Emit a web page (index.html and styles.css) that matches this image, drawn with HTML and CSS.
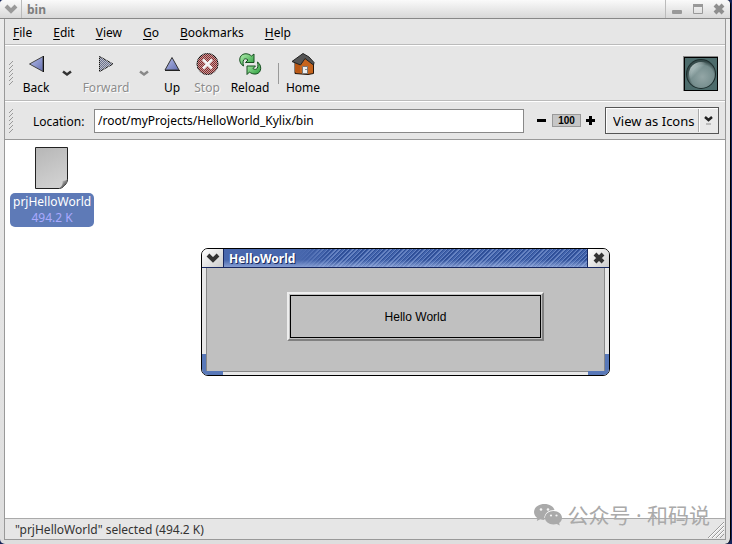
FILE: index.html
```html
<!DOCTYPE html>
<html lang="en">
<head>
<meta charset="utf-8">
<title>bin</title>
<link rel="stylesheet" href="styles.css">
</head>
<body>
<div class="window">
  <header class="titlebar">
    <button class="title-menu" aria-label="Window menu"><svg width="14" height="10" viewBox="0 0 14 10"><path class="chevron" d="M2 2 7 7 12 2"/></svg></button>
    <h1>bin</h1>
    <div class="title-controls">
      <button aria-label="Minimize"><svg width="12" height="12"><rect x="1" y="7" width="10" height="4" rx="1" fill="#999"/></svg></button>
      <button aria-label="Maximize"><svg width="12" height="12"><path d="M1.500 1.500h9v9h-9z" fill="none" stroke="#999"/><path d="M1 1h10v3H1z" fill="#999"/></svg></button>
      <button aria-label="Close"><svg width="12" height="12"><path d="M2 2 10 10M10 2 2 10" stroke="#8e8e8e" stroke-width="4"/></svg></button>
    </div>
  </header>
  <main class="content">
    <nav class="menubar">
      <button><u>F</u>ile</button><button><u>E</u>dit</button><button><u>V</u>iew</button><button><u>G</u>o</button><button><u>B</u>ookmarks</button><button><u>H</u>elp</button>
    </nav>
    <div class="toolbar">
      <svg class="grip" width="6" height="24" viewBox="0 0 6 24"><path d="M1 4 5 0M1 8 5 4M1 12 5 8M1 16 5 12M1 20 5 16M1 24 5 20" stroke="#999"/></svg>
      <button class="tool"><svg width="24" height="24"><defs><linearGradient id="blue" x1="0" y1="0" x2="1" y2="1"><stop offset="0" stop-color="#b9c1ec"/><stop offset="1" stop-color="#636eb0"/></linearGradient></defs><path d="M5.500 12 19 4.500v15z" fill="url(#blue)" stroke="#444"/><path d="M19.500 4v16" stroke="#111"/></svg><span>Back</span></button>
      <button class="drop" aria-label="Back history"><svg width="10" height="7"><path d="M1 1.500 5 4.500 9 1.500" fill="none" stroke="#333" stroke-width="2.500"/></svg></button>
      <button class="tool off" disabled><svg width="24" height="24"><defs><pattern id="checks" width="2" height="2" patternUnits="userSpaceOnUse"><path d="M0 0h1v1H0zM1 1h1v1H1z" fill="#e0e0e0"/></pattern></defs><path d="M5.500 4.500 19 12 5.500 19.500z" fill="#6b7290" stroke="#111"/><path d="M5 4 20 12 5 20z" fill="url(#checks)" opacity=".7"/></svg><span>Forward</span></button>
      <button class="drop" aria-label="Forward history" disabled><svg width="10" height="7"><path d="M1 1.500 5 4.500 9 1.500" fill="none" stroke="#888" stroke-width="2.500"/></svg></button>
      <button class="tool"><svg width="24" height="24"><path d="M12 5.500 19 18H5z" fill="url(#blue)" stroke="#333"/><path d="M5 18.500h15" stroke="#222"/></svg><span>Up</span></button>
      <button class="tool off" disabled><svg width="24" height="24"><circle cx="12.500" cy="12" r="10.500" fill="#8a2828" stroke="#000"/><circle cx="12.500" cy="12" r="11" fill="url(#checks)" opacity=".65"/><path d="M8 7.500 17 16.500M17 7.500 8 16.500" stroke="#f4f4f4" stroke-width="2.500"/></svg><span>Stop</span></button>
      <button class="tool"><svg width="24" height="24"><defs><linearGradient id="green" x1="0" y1="0" x2="1" y2="1"><stop offset="0" stop-color="#b8f1b4"/><stop offset="1" stop-color="#249b37"/></linearGradient></defs><g fill="url(#green)" stroke="#164f20"><path d="M5.500 14C0 11 .5 2.500 7 1.800c3-.3 5 1 6.500 2.200L16 2v8.500H7.500L10 8C6.500 5 4 8 5.500 14z"/><path d="M19.500 10C24 13 24 21 18 22c-3 .3-5-.7-6.500-2L9 22.500V14h8.500L15 16.500c3.500 2.500 6-.5 4.500-6.500z"/></g></svg><span>Reload</span></button>
      <i class="divider"></i>
      <button class="tool"><svg width="24" height="24"><path d="M4 10 14 5l8.500 7v9.500L17 22.500 4 21.500z" fill="#c6641c" stroke="#24150b"/><path d="M4 10 9 6v15L4 20z" fill="#b95714"/><path d="M1 9.500 12 1.500 18 5 23 10.500 22.500 13 14 6.500 9.500 13z" fill="#555" stroke="#222"/><path d="M11.500 14.500h5v7h-5z" fill="#eee" stroke="#777"/><path d="M15 17v1" stroke="#333"/></svg><span>Home</span></button>
      <span></span>
      <svg class="orb" width="35" height="35" viewBox="0 0 35 35"><defs><radialGradient id="glass" cx=".55" cy=".6" r=".55"><stop offset="0" stop-color="#93a6a6"/><stop offset=".75" stop-color="#768e8e"/><stop offset="1" stop-color="#354a4a"/></radialGradient><linearGradient id="shine" x1="0" y1="0" x2="1" y2="1"><stop offset=".12" stop-color="#dce9e9"/><stop offset=".4" stop-color="#dce9e9" stop-opacity="0"/></linearGradient></defs><path d="M0 0h35v35H0z" fill="#888"/><path d="M1 1h34v34H1z"/><path d="M2 2h32v32H2z" fill="#4c6b6b"/><circle cx="18" cy="18" r="15" fill="#1d2d2d"/><circle cx="18" cy="18" r="14" fill="url(#glass)"/><circle cx="18" cy="18" r="12" fill="url(#shine)" opacity=".8"/></svg>
    </div>
    <div class="locationbar">
      <svg class="grip" width="6" height="24" viewBox="0 0 6 24"><path d="M1 4 5 0M1 8 5 4M1 12 5 8M1 16 5 12M1 20 5 16M1 24 5 20" stroke="#999"/></svg>
      <label for="location">Location:</label>
      <input id="location" type="text" value="/root/myProjects/HelloWorld_Kylix/bin">
      <div class="zoom">
        <button aria-label="Zoom out"><svg width="10" height="10"><path d="M0 4.500h9" stroke="#000" stroke-width="3"/></svg></button>
        <button class="level">100</button>
        <button aria-label="Zoom in"><svg width="10" height="10"><path d="M0 4.500h9M4.500 0v9" stroke="#000" stroke-width="3"/></svg></button>
      </div>
      <div class="view">
        <select aria-label="View mode"><option>View as Icons</option></select>
        <svg class="view-arrow" width="21" height="23"><path d="M1.500 0v23" stroke="#aaa"/><path d="M2.500 0v23" stroke="#fff"/><path d="M8 8l3.500 3L15 8" fill="none" stroke="#222" stroke-width="2.500"/><path d="M9 15h5" stroke="#bbb" stroke-width="2"/></svg>
      </div>
    </div>
    <section class="files">
      <button class="file">
        <svg width="34" height="42" viewBox="0 0 34 42"><defs><linearGradient id="paper" x1="0" y1="0" x2=".4" y2="1"><stop offset="0" stop-color="#b6b6b6"/><stop offset="1" stop-color="#d0d0d0"/></linearGradient><linearGradient id="fold" x1="0" y1="0" x2="1" y2="1"><stop offset=".2" stop-color="#ddd"/><stop offset=".7" stop-color="#555"/></linearGradient></defs><path d="M.5.5h32v32.500c0 3-5 8.500-8 8.500H.5z" fill="url(#paper)" stroke="#222"/><path d="M32.500 32c-1 1-3 2-5 2 .5 3-.5 6-4 7.500 4 0 9-5 9-9.500z" fill="url(#fold)"/></svg>
        <span class="file-label">prjHelloWorld<small>494.2 K</small></span>
      </button>
    </section>
    <footer class="status"><span>"prjHelloWorld" selected (494.2 K)</span><svg class="resize" width="18" height="18"><path d="M1 18 17 2M5 18 17 6M9 18 17 10M13 18 17 14" stroke="#999"/><path d="M2 18 17 3M6 18 17 7M10 18 17 11" stroke="#fff"/></svg></footer>
  </main>
</div>

<section class="dialog" aria-labelledby="dialog-title">
  <header class="dialog-bar">
    <button aria-label="Dialog menu"><svg width="14" height="10" viewBox="0 0 14 10"><path class="chevron dark" d="M2 2 7 7 12 2"/></svg></button>
    <h2 id="dialog-title">HelloWorld</h2>
    <button aria-label="Close dialog"><svg width="12" height="12"><path d="M2 2 10 10M10 2 2 10" stroke="#333" stroke-width="4"/></svg></button>
  </header>
  <div class="dialog-body"><button class="hello"><span>Hello World</span></button></div>
  <i class="corner left"></i><i class="corner right"></i>
</section>

<div class="brand">
  <svg width="28" height="24" viewBox="0 0 28 24"><path d="M10.500 1C4.500 1 0 4.500 0 9c0 2.600 1.400 4.800 3.500 6.200L2.800 18l3.500-1.700c1.300.4 2.600.6 4.200.6C9.500 11 14 7 20.500 7 19.500 3.500 15.500 1 10.500 1z" fill="#aaa"/><path d="M19.500 8c-5 0-8.500 3-8.500 6.800s3.700 6.700 8.500 6.700c1.200 0 2.300-.2 3.300-.5l3 1.500-.7-2.500c1.800-1.200 2.900-3 2.900-5.200C28 11 24.500 8 19.500 8z" fill="#aaa"/><g fill="#f4f4f4"><circle cx="7" cy="6.500" r="1.300"/><circle cx="14" cy="6.500" r="1.300"/><circle cx="17" cy="12.500" r="1.100"/><circle cx="22.500" cy="12.500" r="1.100"/></g></svg>
  <span>公众号 · 和码说</span>
</div>
</body>
</html>
```
FILE: styles.css
```css
* { box-sizing: border-box; }
body {
  margin: 0;
  min-height: 100vh;
  background: #14235a;
  font: 12px/16px "Noto Sans", "Open Sans", sans-serif;
  color: #000;
}
button {
  margin: 0;
  padding: 0;
  border: 0;
  background: none;
  font: inherit;
  color: inherit;
}
svg { display: block; flex: none; }
h1, h2 { margin: 0; font-size: 12px; line-height: 16px; }

.window {
  display: flex;
  flex-direction: column;
  min-height: 100vh;
  margin-right: 1px;
  padding-bottom: 4px;
  border-right: 1px solid #000;
  border-radius: 4px 5px 6px 5px;
  background: linear-gradient(#ececec, #dedede);
}
.titlebar {
  display: flex;
  align-items: stretch;
  height: 19px;
  border-bottom: 1px solid #888;
  border-radius: 4px 4px 0 0;
  background: linear-gradient(#fafafa, #d8d8d8);
}
.titlebar h1 { flex: 1; padding: 2px 5px 0; color: #7d7d7d; }
.title-menu {
  display: grid;
  place-items: center;
  width: 22px;
  border-right: 1px solid #bbb;
}
.chevron { fill: none; stroke: #999; stroke-width: 4; }
.chevron.dark { stroke: #333; }
.title-controls {
  display: flex;
  align-items: center;
  gap: 9px;
  padding: 0 5px;
  border-left: 1px solid #bbb;
}

.content {
  display: flex;
  flex: 1;
  flex-direction: column;
  margin: 0 4px 0 4px;
  border: solid #999;
  border-width: 0 1px 1px;
  background: #e6e6e6;
}
.menubar {
  display: flex;
  gap: 21px;
  height: 26px;
  padding: 2px 8px 0;
  border-bottom: 1px solid #bbb;
}
.menubar u { text-underline-offset: 2px; }
.toolbar {
  display: grid;
  grid-template-columns: 12px 38px 24px 54px 22px 34px 36px 50px 6px 44px 1fr 35px;
  align-items: center;
  height: 56px;
  padding-right: 7px;
  border-top: 1px solid #fff;
  border-bottom: 1px solid #bbb;
}
.grip { margin-left: 3px; }
.tool {
  display: flex;
  flex-direction: column;
  align-items: center;
  gap: 4px;
  padding-top: 2px;
  white-space: nowrap;
}
.off { color: #8c8c8c; text-shadow: 1px 1px #fff; }
.drop { display: grid; place-items: center; }
.divider { height: 21px; margin-left: 3px; border-left: 1px solid #999; }

.locationbar {
  display: flex;
  align-items: center;
  height: 39px;
  padding-right: 6px;
  border-top: 1px solid #fff;
  border-bottom: 1px solid #999;
}
.locationbar label { width: 80px; padding: 2px 0 0 19px; white-space: nowrap; }
.locationbar input {
  flex: 1;
  min-width: 0;
  height: 24px;
  padding: 0 3px;
  border: 1px solid #888;
  border-radius: 0;
  outline: 0;
  background: #fff;
  font: inherit;
}
.zoom { display: flex; align-items: center; gap: 5px; padding: 0 9px 0 13px; }
.zoom .level {
  width: 29px;
  height: 13px;
  border: 1px solid #999;
  background: #c6c6c6;
  font: bold 10px/11px "Liberation Sans", sans-serif;
}
.view { position: relative; }
.view select {
  width: 114px;
  height: 27px;
  padding: 1px 7px 0;
  border: 1px solid #555;
  border-radius: 0;
  appearance: none;
  background: #e9e9e9;
  box-shadow: inset 1px 1px #fff;
  font: inherit;
  font-size: 13px;
}
.view-arrow { position: absolute; top: 2px; right: 1px; pointer-events: none; }

.files { flex: 1; padding: 7px 5px; background: #fff; }
.file { display: inline-flex; flex-direction: column; align-items: center; gap: 4px; }
.file-label {
  padding: 1px 3px;
  border-radius: 5px;
  background: #5e7ab7;
  color: #fff;
}
.file-label small { display: block; font-size: 12px; color: #aaaaff; }
.status {
  display: flex;
  justify-content: space-between;
  height: 21px;
  padding: 1px 0 0 10px;
  border-top: 1px solid #aaa;
  color: #333;
  line-height: 20px;
}

.dialog {
  position: absolute;
  top: 248px;
  left: 201px;
  width: 409px;
  overflow: hidden;
  border: 1px solid #000;
  border-radius: 7px;
  background: #e8e8e8;
}
.dialog-bar {
  display: flex;
  height: 19px;
  border-bottom: 1px solid #182860;
}
.dialog-bar button {
  display: grid;
  place-items: center;
  width: 21px;
  background: linear-gradient(135deg, #fff, #ccc);
}
.dialog-bar h2 {
  flex: 1;
  padding: 2px 5px 0;
  border: solid #182860;
  border-width: 0 1px;
  background:
    linear-gradient(transparent 60%, #a5b9e5aa),
    linear-gradient(90deg, #4867ad 74px, transparent 110px),
    repeating-linear-gradient(135deg, #4264ad 0 1px, #6683c2 1px 2px, #2f4f98 2px 3px);
  color: #fff;
  text-shadow: 1px 1px #1a2b60;
}
.dialog-body {
  display: grid;
  place-items: center;
  height: 104px;
  margin: 0 4px 3px;
  border: solid #888;
  border-width: 0 1px 1px;
  background: #c0c0c0;
}
.hello {
  width: 257px;
  height: 49px;
  margin: 0 0 6px 20px;
  padding: 1px;
  border: 2px solid;
  border-color: #eee #808080 #808080 #eee;
  font: 12px/16px "Liberation Sans", Arial, sans-serif;
}
.hello span {
  display: grid;
  place-items: center;
  height: 43px;
  border: 1px solid #000;
}
.corner {
  position: absolute;
  bottom: 0;
  width: 21px;
  height: 21px;
  border-bottom: 4px solid #5878b8;
}
.corner.left { left: 0; border-left: 4px solid #5878b8; }
.corner.right { right: 0; border-right: 4px solid #5878b8; }

.brand {
  position: absolute;
  right: 22px;
  bottom: 16px;
  display: flex;
  align-items: center;
  gap: 5px;
  color: #aaa;
  font: 21px/26px "Noto Sans", "Noto Sans CJK SC", sans-serif;
  white-space: nowrap;
}
```
